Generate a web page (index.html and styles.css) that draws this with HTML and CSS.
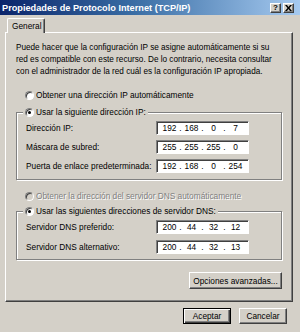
FILE: index.html
```html
<!DOCTYPE html>
<html lang="es">
<head>
<meta charset="utf-8">
<title>Propiedades de Protocolo Internet (TCP/IP)</title>
<link rel="stylesheet" href="styles.css">
</head>
<body>
<div class="win">
  <div class="titlebar">
    <span class="title">Propiedades de Protocolo Internet (TCP/IP)</span>
    <div class="tbtns">
      <span class="tbtn help">?</span>
      <span class="tbtn close"><svg width="7" height="6" viewBox="0 0 7 6"><path d="M0 0h2l1.5 2L5 0h2L4.5 3 7 6H5L3.5 4 2 6H0l2.5-3z" fill="#000"/></svg></span>
    </div>
  </div>
  <div class="content">
    <div class="tabs"><div class="tab">General</div></div>
    <div class="panel">
      <p class="intro">Puede hacer que la configuración IP se asigne automáticamente si su red es compatible con este recurso. De lo contrario, necesita consultar con el administrador de la red cuál es la configuración IP apropiada.</p>
      <div class="opt first"><span class="radio"></span>Obtener una dirección IP automáticamente</div>
      <fieldset class="group g1">
        <legend><span class="opt"><span class="radio on"></span>Usar la siguiente dirección IP:</span></legend>
        <div class="row"><span class="lbl">Dirección IP:</span><div class="ip"><span>192</span><i>.</i><span>168</span><i>.</i><span>0</span><i>.</i><span>7</span></div></div>
        <div class="row"><span class="lbl">Máscara de subred:</span><div class="ip"><span>255</span><i>.</i><span>255</span><i>.</i><span>255</span><i>.</i><span>0</span></div></div>
        <div class="row"><span class="lbl">Puerta de enlace predeterminada:</span><div class="ip"><span>192</span><i>.</i><span>168</span><i>.</i><span>0</span><i>.</i><span>254</span></div></div>
      </fieldset>
      <div class="opt disabled"><span class="radio off"></span>Obtener la dirección del servidor DNS automáticamente</div>
      <fieldset class="group g2">
        <legend><span class="opt"><span class="radio on"></span>Usar las siguientes direcciones de servidor DNS:</span></legend>
        <div class="row"><span class="lbl">Servidor DNS preferido:</span><div class="ip"><span>200</span><i>.</i><span>44</span><i>.</i><span>32</span><i>.</i><span>12</span></div></div>
        <div class="row"><span class="lbl">Servidor DNS alternativo:</span><div class="ip"><span>200</span><i>.</i><span>44</span><i>.</i><span>32</span><i>.</i><span>13</span></div></div>
      </fieldset>
      <div class="advrow"><button class="btn adv">Opciones avanzadas...</button></div>
    </div>
    <div class="footer">
      <button class="btn default">Aceptar</button>
      <button class="btn">Cancelar</button>
    </div>
  </div>
</div>
</body>
</html>
```
FILE: styles.css
```css
html, body {
  margin: 0;
  padding: 0;
  background: #d4d0c8;
}
body {
  font-family: "Liberation Sans", Arial, sans-serif;
  font-size: 8.3px;
  color: #000;
}
.win {
  width: 300px;
  height: 332px;
  background: #d4d0c8;
  overflow: hidden;
}
.titlebar {
  height: 15px;
  display: flex;
  align-items: center;
  justify-content: space-between;
  background: linear-gradient(to right, #0a246a 0%, #3a6ea5 45%, #a6caf0 100%);
  padding: 0 6px 0 2px;
}
.title {
  color: #fff;
  font-weight: bold;
  font-size: 9.2px;
  white-space: nowrap;
}
.tbtns {
  display: flex;
  gap: 2px;
}
.tbtn {
  width: 11px;
  height: 10px;
  box-sizing: border-box;
  background: #d4d0c8;
  border: 1px solid;
  border-color: #fff #404040 #404040 #fff;
  box-shadow: inset -1px -1px 0 #808080;
  display: flex;
  align-items: center;
  justify-content: center;
  font-weight: bold;
  font-size: 8px;
  line-height: 1;
}
.tabs {
  display: flex;
  padding: 3px 0 0 7px;
  position: relative;
  z-index: 1;
}
.tab {
  width: 38px;
  height: 15px;
  box-sizing: border-box;
  border: 1px solid;
  border-color: #fff #404040 transparent #fff;
  border-bottom: none;
  box-shadow: inset -1px 0 0 #808080;
  border-radius: 2px 2px 0 0;
  background: #d4d0c8;
  padding: 2px 0 0 4px;
  margin-bottom: -1px;
  line-height: 11px;
}
.panel {
  margin-left: 5px;
  width: 288px;
  height: 270px;
  box-sizing: border-box;
  border: 1px solid;
  border-color: #fff #404040 #404040 #fff;
  box-shadow: inset -1px -1px 0 #808080;
  padding: 9px 10px 0 10px;
  display: flex;
  flex-direction: column;
}
.intro {
  margin: 0;
  line-height: 12px;
  width: 264px;
  font-size: 8.2px;
}
.opt {
  display: flex;
  align-items: center;
  height: 12px;
  line-height: 12px;
  white-space: nowrap;
}
.opt.first {
  margin: 11px 0 0 9px;
}
.opt.disabled {
  margin: 10px 0 0 9px;
  color: #808080;
  text-shadow: 1px 1px 0 #fff;
}
.radio {
  position: relative;
  width: 9px;
  height: 9px;
  box-sizing: border-box;
  border-radius: 50%;
  background: #fff;
  border: 1px solid;
  border-color: #808080 #fff #fff #808080;
  box-shadow: inset 1px 1px 0 #404040;
  margin-right: 2px;
  flex: none;
}
.radio.off {
  background: #d4d0c8;
}
.radio.on::after {
  content: "";
  position: absolute;
  left: 2px;
  top: 2px;
  width: 3px;
  height: 3px;
  border-radius: 50%;
  background: #000;
}
.group {
  margin: 5px 0 0 0;
  padding: 3px 32px 6px 9px;
  border: 1px solid #808080;
  box-shadow: inset 1px 1px 0 #fff, 1px 1px 0 #fff;
  display: flex;
  flex-direction: column;
  gap: 5px;
  min-width: 0;
}
.group.g2 {
  margin-top: 3px;
  gap: 6px;
  padding-bottom: 5px;
}
.group legend {
  padding: 0 2px;
  margin-left: -3px;
  background: #d4d0c8;
}
.row {
  display: flex;
  align-items: center;
  justify-content: space-between;
  height: 14px;
}
.ip {
  width: 93px;
  height: 14px;
  box-sizing: border-box;
  background: #fff;
  border: 1px solid;
  border-color: #808080 #fff #fff #808080;
  box-shadow: inset 1px 1px 0 #404040;
  display: grid;
  grid-template-columns: 17px 5px 17px 5px 17px 5px 17px;
  padding-left: 4px;
  align-items: center;
  line-height: 12px;
}
.ip span, .ip i {
  text-align: center;
  font-style: normal;
}
.advrow {
  display: flex;
  justify-content: flex-end;
  margin-top: 12px;
}
.btn {
  font-family: "Liberation Sans", Arial, sans-serif;
  font-size: 8.3px;
  color: #000;
  background: #d4d0c8;
  border: 1px solid;
  border-color: #fff #404040 #404040 #fff;
  box-shadow: inset -1px -1px 0 #808080;
  padding: 0;
  margin: 0;
  height: 17px;
}
.btn.adv {
  width: 93px;
}
.footer {
  display: flex;
  justify-content: flex-end;
  gap: 8px;
  padding: 6px 13px 0 0;
}
.footer .btn {
  width: 48px;
  height: 16px;
}
.btn.default {
  border: 1px solid #000;
  box-shadow: inset 1px 1px 0 #fff, inset -1px -1px 0 #404040, inset -2px -2px 0 #808080;
}
```
